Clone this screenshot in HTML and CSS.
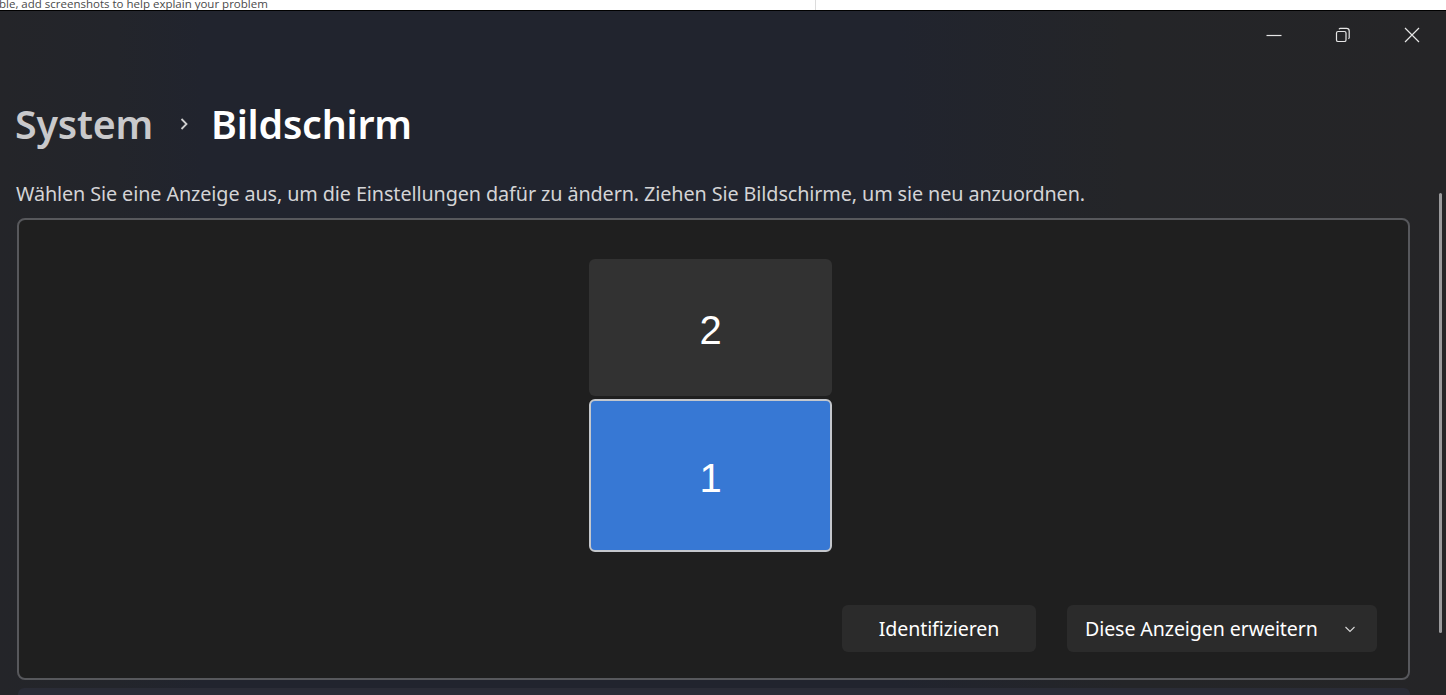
FILE: index.html
```html
<!DOCTYPE html>
<html lang="de">

<head>
    <meta charset="UTF-8">
    <meta name="viewport" content="width=device-width, initial-scale=1.0">
    <title>Einstellungen - Bildschirm</title>
    <link rel="stylesheet" href="styles.css">
</head>

<body>
    <div class="browser-strip">
        <span class="strip-text">ble, add screenshots to help explain your problem</span>
        <span class="strip-divider"></span>
    </div>

    <div class="window">
        <div class="titlebar">
            <button class="caption-btn" title="Minimieren">
                <svg width="16" height="16" viewBox="0 0 16 16"><path d="M0.5 8.5h15" stroke="#e6e6e6" stroke-width="1.2" fill="none"/></svg>
            </button>
            <button class="caption-btn" title="Wiederherstellen">
                <svg width="16" height="16" viewBox="0 0 16 16" fill="none" stroke="#e6e6e6" stroke-width="1.2">
                    <rect x="1.5" y="4.5" width="9.5" height="10" rx="1.6"/>
                    <path d="M4 2.2c.3-.5.8-.8 1.4-.8h6.2c1.5 0 2.6 1.1 2.6 2.6v6.4c0 .6-.3 1.1-.8 1.4"/>
                </svg>
            </button>
            <button class="caption-btn" title="Schließen">
                <svg width="16" height="16" viewBox="0 0 16 16"><path d="M1 1l14 14M15 1L1 15" stroke="#e6e6e6" stroke-width="1.2" fill="none"/></svg>
            </button>
        </div>

        <div class="content">
            <h1 class="breadcrumb">
                <span class="crumb-parent">System</span>
                <svg class="crumb-chevron" width="14" height="14" viewBox="0 0 14 14"><path d="M4.5 2l5 5-5 5" stroke="#d0d0d0" stroke-width="1.8" fill="none"/></svg>
                <span class="crumb-current">Bildschirm</span>
            </h1>

            <p class="description">Wählen Sie eine Anzeige aus, um die Einstellungen dafür zu ändern. Ziehen Sie Bildschirme, um sie neu anzuordnen.</p>

            <div class="arrange-panel">
                <div class="monitor-area">
                    <div class="monitor">2</div>
                    <div class="monitor selected">1</div>
                </div>
                <div class="panel-actions">
                    <button class="action-btn identify">Identifizieren</button>
                    <button class="action-btn dropdown">
                        <span>Diese Anzeigen erweitern</span>
                        <svg width="14" height="14" viewBox="0 0 14 14"><path d="M2.5 5l4.5 4.5L11.5 5" stroke="#d8d8d8" stroke-width="1.1" fill="none"/></svg>
                    </button>
                </div>
            </div>

            <div class="next-card"></div>
        </div>

        <div class="scrollbar"></div>
    </div>
</body>

</html>
```

FILE: styles.css
```css
body {
    margin: 0;
    padding: 0;
    width: 1446px;
    height: 695px;
    overflow: hidden;
    font-family: "Noto Sans", "Open Sans", sans-serif;
    background-color: #21242e;
    color: white;
}

.browser-strip {
    position: relative;
    height: 10px;
    background-color: #ffffff;
    border-bottom: 1px solid #000000;
    overflow: hidden;
}

.strip-text {
    position: absolute;
    left: -1px;
    top: -4px;
    font-family: "Open Sans", sans-serif;
    font-size: 11.5px;
    color: #4a4a4a;
    white-space: nowrap;
}

.strip-divider {
    position: absolute;
    left: 815px;
    top: 0;
    width: 1px;
    height: 10px;
    background-color: #dcdcdc;
}

.window {
    position: relative;
    height: 684px;
    background: linear-gradient(90deg, #242529 0, #23252b 8%, #21242e 14%, #21242e 62%, #242528 78%, #252527 100%);
}

.titlebar {
    display: flex;
    justify-content: flex-end;
    height: 48px;
}

.caption-btn {
    width: 69px;
    height: 48px;
    display: flex;
    align-items: center;
    justify-content: center;
    background: none;
    border: none;
    padding: 0;
}

.content {
    padding: 0 36px 0 16px;
}

.breadcrumb {
    display: flex;
    align-items: center;
    margin: 37px 0 0 -1px;
    height: 56px;
    font-size: 39.3px;
    font-weight: 600;
    letter-spacing: -0.2px;
}

.crumb-parent {
    color: #c9c9cb;
}

.crumb-chevron {
    margin: 0 20px 0 24px;
}

.crumb-current {
    color: #ffffff;
}

.description {
    margin: 27px 0 0 0;
    font-size: 19.8px;
    color: #d4d4d6;
    line-height: 30px;
    letter-spacing: -0.1px;
}

.arrange-panel {
    margin-top: 9px;
    margin-left: 1px;
    width: 1389px;
    height: 458px;
    background-color: #1f1f1f;
    border: 2px solid #57585c;
    border-radius: 8px;
    display: flex;
    flex-direction: column;
}

.monitor-area {
    display: flex;
    flex-direction: column;
    align-items: center;
    padding-top: 39px;
    padding-right: 6px;
    gap: 3px;
}

.monitor {
    width: 243px;
    height: 137px;
    display: flex;
    align-items: center;
    justify-content: center;
    padding-top: 6px;
    background-color: #323232;
    border-radius: 6px;
    font-family: "Liberation Sans", Arial, sans-serif;
    font-size: 40px;
    color: #ffffff;
    box-sizing: border-box;
}

.monitor.selected {
    height: 153px;
    background-color: #3778d4;
    border: 2px solid #c4c7cc;
}

.panel-actions {
    display: flex;
    justify-content: flex-end;
    gap: 31px;
    margin-top: 53px;
    padding-right: 31px;
}

.action-btn {
    height: 47px;
    background-color: #2b2b2b;
    border: none;
    border-radius: 6px;
    color: #ffffff;
    font-family: "Noto Sans", "Open Sans", sans-serif;
    font-size: 19.6px;
    letter-spacing: -0.1px;
    display: flex;
    align-items: center;
}

.identify {
    width: 194px;
    justify-content: center;
}

.dropdown {
    width: 310px;
    padding: 0 20px 0 18px;
    justify-content: space-between;
}

.next-card {
    margin-top: 8px;
    margin-left: 2px;
    height: 40px;
    background-color: #2a2c36;
    border-radius: 6px;
}

.scrollbar {
    position: absolute;
    right: 4px;
    top: 182px;
    width: 3px;
    height: 440px;
    background-color: #9a9a9c;
    border-radius: 2px;
}
```
